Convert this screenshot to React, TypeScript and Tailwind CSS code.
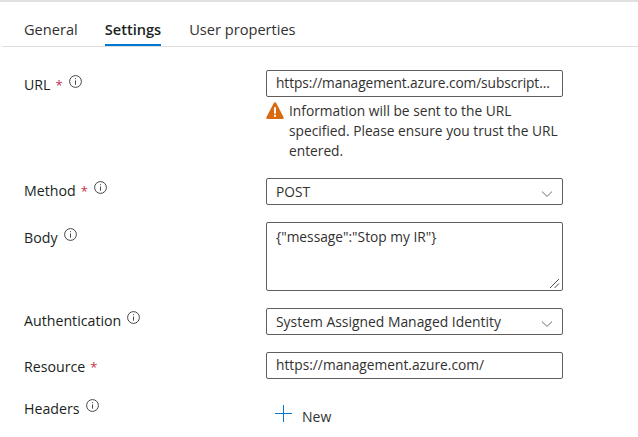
import { ReactNode } from "react";

const font = "font-['Open_Sans','Liberation_Sans',sans-serif]";

function InfoIcon() {
  return (
    <svg width="13" height="13" viewBox="0 0 13 13" fill="none" className="shrink-0 text-[#323130]">
      <circle cx="6.5" cy="6.5" r="5.9" stroke="currentColor" strokeWidth="0.9" />
      <path d="M6.5 5.5v4.2" stroke="currentColor" strokeWidth="0.9" />
      <path d="M6.5 3.2v1" stroke="currentColor" strokeWidth="0.9" />
    </svg>
  );
}

function Chevron() {
  return (
    <svg width="12" height="12" viewBox="0 0 12 12" fill="none" className="shrink-0 mt-[4px]">
      <path d="M1 3.6 6 8.4l5-4.8" stroke="#605e5c" strokeWidth="0.9" />
    </svg>
  );
}

function Label({ text, required, info }: { text: string; required?: boolean; info?: boolean }) {
  return (
    <div className="w-[242px] shrink-0 flex items-start">
      <span className="text-[14.2px] leading-[20px] text-[#201f1e]">{text}</span>
      {required && <span className="ml-[5px] text-[13px] leading-[20px] text-[#c4314b]">*</span>}
      {info && (
        <span className="ml-[6px]">
          <InfoIcon />
        </span>
      )}
    </div>
  );
}

function Field({ children, select }: { children: ReactNode; select?: boolean }) {
  return (
    <div
      className={
        select
          ? "w-[297px] h-[27px] flex items-center justify-between pl-[9px] pr-[9px] pt-[1px] border border-[#605e5c] rounded-[2px] text-[13.75px] text-[#323130] whitespace-nowrap"
          : "w-[297px] h-[27px] flex items-center justify-between pl-[9px] pr-[9px] pb-[1px] border border-[#605e5c] rounded-[2px] text-[13.75px] text-[#323130] whitespace-nowrap"
      }
    >
      {children}
    </div>
  );
}

export default function App() {
  return (
    <div className={`w-[638px] h-[437px] overflow-hidden bg-white ${font}`}>
      <div className="h-[2px] bg-[#e1e1e1]" />
      <div className="ml-[2px] h-[45px] flex items-end pl-[22px] border-b border-[#e1dfdd]">
        <span className="h-[45px] pt-[18px] text-[14.6px] leading-[20px] text-[#323130]">General</span>
        <span className="ml-[27px] h-[45px] pt-[18px] text-[14.6px] leading-[20px] font-semibold text-[#201f1e] border-b-2 border-[#0078d4]">Settings</span>
        <span className="ml-[28px] h-[45px] pt-[18px] text-[14.6px] leading-[20px] text-[#323130]">User properties</span>
      </div>

      <div className="pl-[24px] pt-[23px] flex flex-col">
        <div className="flex">
          <div className="pt-[5px]">
            <Label text="URL" required info />
          </div>
          <div className="w-[297px]">
            <Field>
              <span className="tracking-[-0.1px]">https://management.azure.com/subscript...</span>
            </Field>
            <div className="mt-[4px] flex gap-[5px] text-[13.75px] leading-[20px] text-[#323130]">
              <svg width="18" height="18" viewBox="0 0 18 18" className="shrink-0 mt-[1px]">
                <path d="M9 .2c.5 0 .9.3 1.2.7l7.4 14.3c.4.8-.1 1.7-1 1.7H1.4c-.9 0-1.4-.9-1-1.7L7.8.9C8.1.5 8.5.2 9 .2Z" fill="#d86a10" />
                <path d="M9 5.2v6.4" stroke="#fff" strokeWidth="2" />
                <path d="M9 12.8v2" stroke="#fff" strokeWidth="2" />
              </svg>
              <span>Information will be sent to the URL specified. Please ensure you trust the URL entered.</span>
            </div>
          </div>
        </div>

        <div className="flex mt-[17px]">
          <div className="pt-[3px]">
            <Label text="Method" required info />
          </div>
          <Field select>
            <span>POST</span>
            <Chevron />
          </Field>
        </div>

        <div className="flex mt-[17px]">
          <div className="pt-[6px]">
            <Label text="Body" info />
          </div>
          <div className="relative w-[297px] h-[69px] pl-[9px] pt-[4px] border border-[#605e5c] rounded-[2px] text-[13.75px] leading-[20px] text-[#323130]">
            {'{"message":"Stop my IR"}'}
            <svg width="11" height="11" viewBox="0 0 11 11" className="absolute right-[2px] bottom-[1px]">
              <path d="M1 10 10 1M5.5 10 10 5.5" stroke="#505050" strokeWidth="1" />
            </svg>
          </div>
        </div>

        <div className="flex mt-[17px]">
          <div className="pt-[3px]">
            <Label text="Authentication" info />
          </div>
          <Field select>
            <span className="text-[13.9px]">System Assigned Managed Identity</span>
            <Chevron />
          </Field>
        </div>

        <div className="flex mt-[17px]">
          <div className="pt-[5px]">
            <Label text="Resource" required />
          </div>
          <Field>
            <span>https://management.azure.com/</span>
          </Field>
        </div>

        <div className="flex mt-[17px]">
          <div className="pt-[3px]">
            <Label text="Headers" info />
          </div>
          <div className="flex items-start gap-[10px] pl-[9px] pt-[9px] text-[14px] leading-[20px] text-[#323130]">
            <svg width="17" height="17" viewBox="0 0 17 17" fill="none">
              <path d="M8.5 0v17M0 8.5h17" stroke="#0078d4" strokeWidth="1" />
            </svg>
            <span className="mt-[2px]">New</span>
          </div>
        </div>
      </div>
    </div>
  );
}
